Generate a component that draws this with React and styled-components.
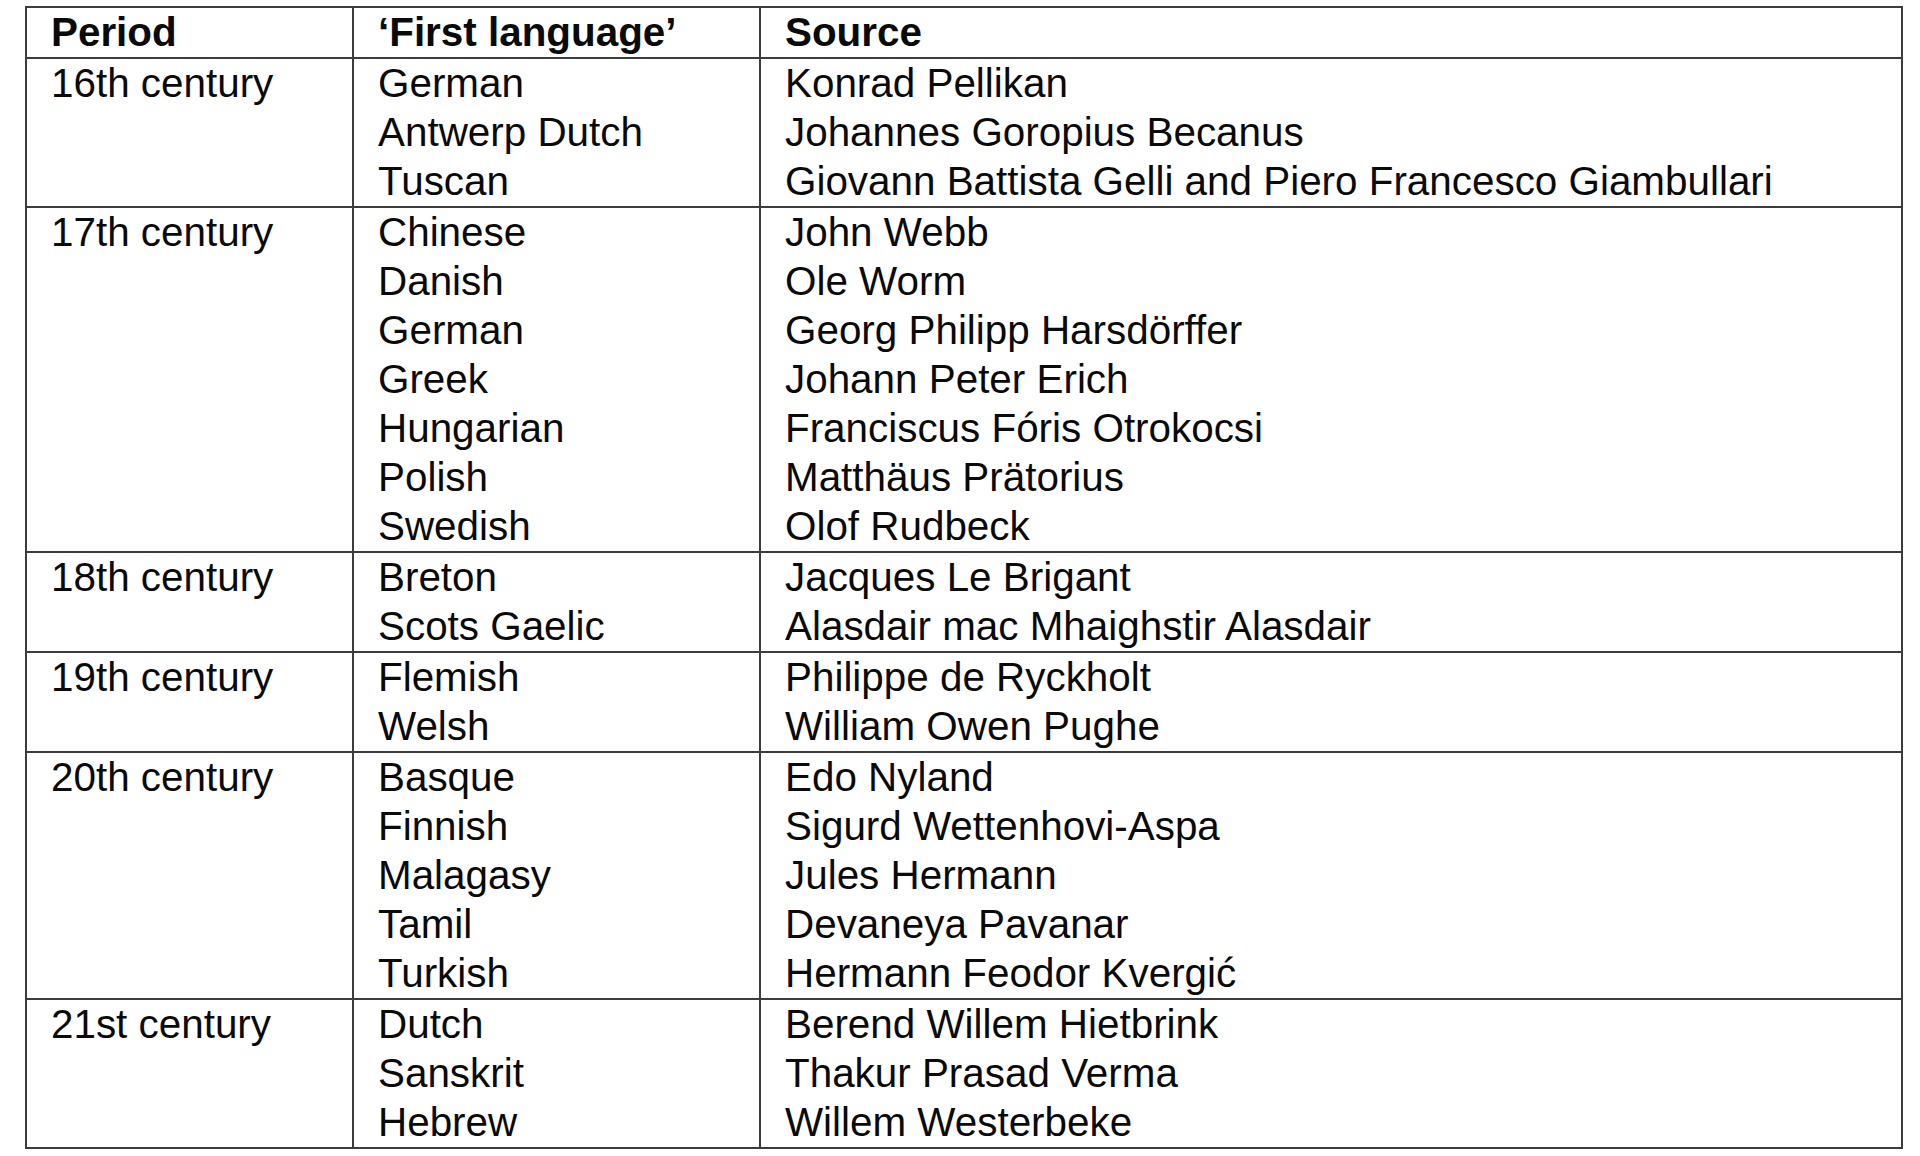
import React from 'react';
import styled, { createGlobalStyle } from 'styled-components';

const GlobalStyle = createGlobalStyle`
  html, body {
    margin: 0;
    padding: 0;
    background: #ffffff;
  }
  * {
    -webkit-font-smoothing: antialiased;
  }
`;

const Page = styled.div`
  padding: 6px 17px 0 25px;
  background: #ffffff;
`;

const Table = styled.table`
  width: 100%;
  border-collapse: collapse;
  table-layout: fixed;
  font-family: 'Liberation Sans', Arial, sans-serif;
  font-size: 40.4px;
  color: #0a0a0a;

  col.period {
    width: 327px;
  }
  col.language {
    width: 407px;
  }
`;

const Cell = styled.td`
  border: 2px solid #3c3c3c;
  padding: 0 0 0 24px;
  vertical-align: top;
  line-height: 49px;
  white-space: nowrap;
  text-align: left;
  font-weight: ${(p) => (p.$head ? 700 : 400)};
`;

const Line = styled.div`
  height: 49px;
`;

const rows = [
  {
    period: '16th century',
    items: [
      ['German', 'Konrad Pellikan'],
      ['Antwerp Dutch', 'Johannes Goropius Becanus'],
      ['Tuscan', 'Giovann Battista Gelli and Piero Francesco Giambullari'],
    ],
  },
  {
    period: '17th century',
    items: [
      ['Chinese', 'John Webb'],
      ['Danish', 'Ole Worm'],
      ['German', 'Georg Philipp Harsdörffer'],
      ['Greek', 'Johann Peter Erich'],
      ['Hungarian', 'Franciscus Fóris Otrokocsi'],
      ['Polish', 'Matthäus Prätorius'],
      ['Swedish', 'Olof Rudbeck'],
    ],
  },
  {
    period: '18th century',
    items: [
      ['Breton', 'Jacques Le Brigant'],
      ['Scots Gaelic', 'Alasdair mac Mhaighstir Alasdair'],
    ],
  },
  {
    period: '19th century',
    items: [
      ['Flemish', 'Philippe de Ryckholt'],
      ['Welsh', 'William Owen Pughe'],
    ],
  },
  {
    period: '20th century',
    items: [
      ['Basque', 'Edo Nyland'],
      ['Finnish', 'Sigurd Wettenhovi-Aspa'],
      ['Malagasy', 'Jules Hermann'],
      ['Tamil', 'Devaneya Pavanar'],
      ['Turkish', 'Hermann Feodor Kvergić'],
    ],
  },
  {
    period: '21st century',
    items: [
      ['Dutch', 'Berend Willem Hietbrink'],
      ['Sanskrit', 'Thakur Prasad Verma'],
      ['Hebrew', 'Willem Westerbeke'],
    ],
  },
];

const App = () => (
  <Page>
    <GlobalStyle />
    <Table>
      <colgroup>
        <col className="period" />
        <col className="language" />
        <col />
      </colgroup>
      <thead>
        <tr>
          <Cell as="th" $head>
            <Line>Period</Line>
          </Cell>
          <Cell as="th" $head>
            <Line>‘First language’</Line>
          </Cell>
          <Cell as="th" $head>
            <Line>Source</Line>
          </Cell>
        </tr>
      </thead>
      <tbody>
        {rows.map((row) => (
          <tr key={row.period}>
            <Cell>
              <Line>{row.period}</Line>
            </Cell>
            <Cell>
              {row.items.map(([lang]) => (
                <Line key={lang}>{lang}</Line>
              ))}
            </Cell>
            <Cell>
              {row.items.map(([lang, source]) => (
                <Line key={lang}>{source}</Line>
              ))}
            </Cell>
          </tr>
        ))}
      </tbody>
    </Table>
  </Page>
);

export default App;
